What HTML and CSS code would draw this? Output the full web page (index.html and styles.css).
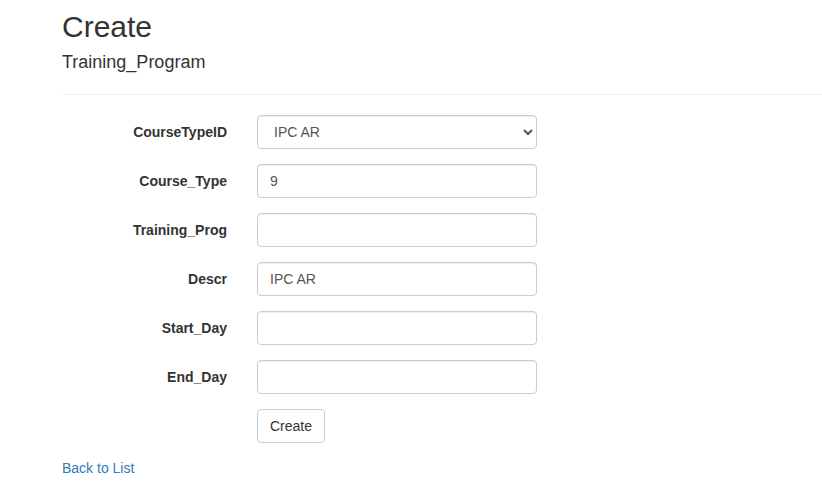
FILE: index.html
```html
<!DOCTYPE html>
<html lang="en">
<head>
    <meta charset="UTF-8">
    <meta name="viewport" content="width=device-width, initial-scale=1.0">
    <title>Create - Training_Program</title>
    <link rel="stylesheet" href="styles.css">
</head>
<body>
    <div class="container">
        <h2>Create</h2>
        <form class="form-horizontal" action="/Training_Program/Create" method="post">
            <h4>Training_Program</h4>
            <hr>
            <div class="form-group">
                <label for="CourseTypeID">CourseTypeID</label>
                <select id="CourseTypeID" name="CourseTypeID" class="form-control">
                    <option value="1" selected>IPC AR</option>
                </select>
            </div>
            <div class="form-group">
                <label for="Course_Type">Course_Type</label>
                <input type="text" id="Course_Type" name="Course_Type" class="form-control" value="9">
            </div>
            <div class="form-group">
                <label for="Training_Prog">Training_Prog</label>
                <input type="text" id="Training_Prog" name="Training_Prog" class="form-control">
            </div>
            <div class="form-group">
                <label for="Descr">Descr</label>
                <input type="text" id="Descr" name="Descr" class="form-control" value="IPC AR">
            </div>
            <div class="form-group">
                <label for="Start_Day">Start_Day</label>
                <input type="text" id="Start_Day" name="Start_Day" class="form-control">
            </div>
            <div class="form-group">
                <label for="End_Day">End_Day</label>
                <input type="text" id="End_Day" name="End_Day" class="form-control">
            </div>
            <div class="form-group">
                <span></span>
                <div><button type="submit" class="btn">Create</button></div>
            </div>
        </form>
        <div class="back">
            <a href="/Training_Program">Back to List</a>
        </div>
    </div>
</body>
</html>
```
FILE: styles.css
```css
body {
    margin: 0;
    background-color: #fff;
    color: #333;
    font-family: "Liberation Sans", Arial, sans-serif;
    font-size: 14px;
    line-height: 1.42857;
}
.container {
    padding-left: 62px;
    overflow: hidden;
}
h2 {
    font-size: 30px;
    font-weight: 500;
    line-height: 1.1;
    margin: 10px 0 10px;
}
h4 {
    font-size: 18px;
    font-weight: 500;
    line-height: 1.1;
    margin: 10px 0 10px;
}
hr {
    border: 0;
    border-top: 1px solid #eee;
    margin: 21px 0 20px;
    width: 800px;
}
.form-group {
    display: grid;
    grid-template-columns: 165px 280px;
    column-gap: 30px;
    margin-bottom: 15px;
}
.form-group label {
    text-align: right;
    font-weight: bold;
    padding-top: 8px;
}
.form-control {
    display: block;
    box-sizing: border-box;
    width: 280px;
    height: 34px;
    padding: 6px 12px;
    font-family: inherit;
    font-size: 14px;
    color: #555;
    background-color: #fff;
    border: 1px solid #ccc;
    border-radius: 4px;
    box-shadow: inset 0 1px 1px rgba(0, 0, 0, 0.075);
}
.btn {
    display: inline-block;
    box-sizing: border-box;
    height: 34px;
    padding: 6px 12px;
    font-family: inherit;
    font-size: 14px;
    color: #333;
    background-color: #fff;
    border: 1px solid #ccc;
    border-radius: 4px;
    cursor: pointer;
}
.back {
    margin-top: 16px;
}
.back a {
    color: #337ab7;
    text-decoration: none;
}
```
